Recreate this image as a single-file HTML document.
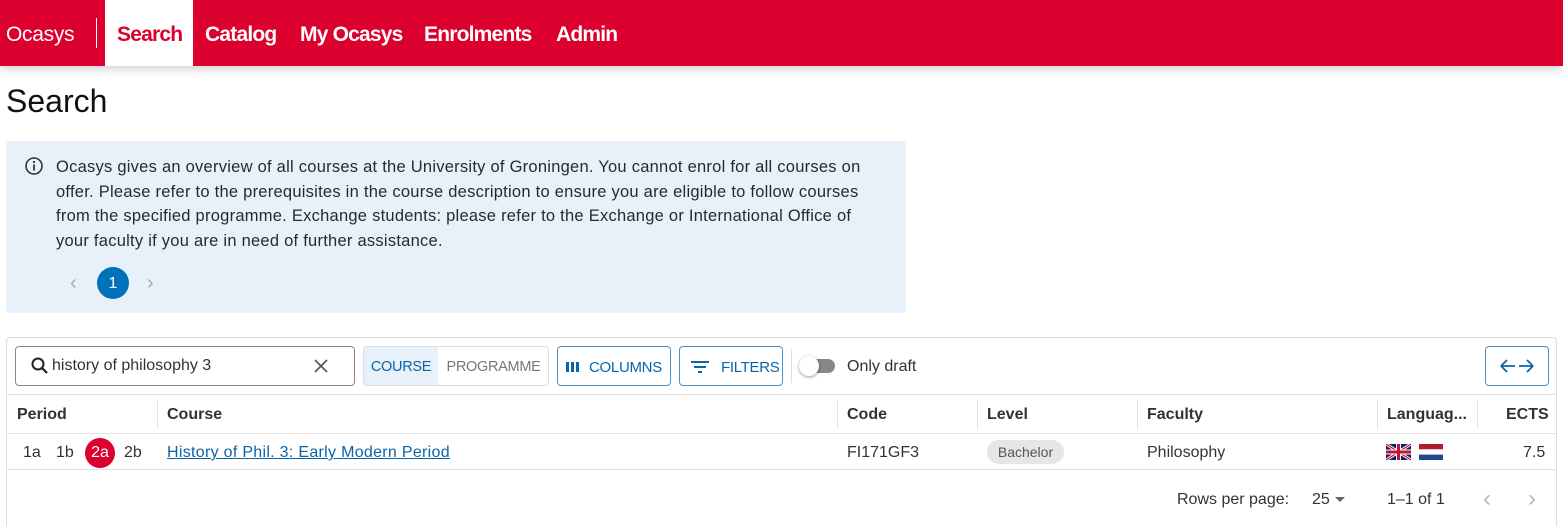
<!DOCTYPE html>
<html><head><meta charset="utf-8"><style>
*{box-sizing:border-box;margin:0;padding:0}
html,body{width:1563px;height:526px;overflow:hidden}
body{background:#fff;font-family:"Liberation Sans",sans-serif;color:#222;position:relative}
.a{position:absolute}
nav{position:absolute;left:0;top:0;width:1563px;height:66px;background:#dc002e;box-shadow:0 3px 10px rgba(0,0,0,.18)}
nav span{position:absolute;top:23px;font-size:21px;color:#fff;font-weight:bold;letter-spacing:-.8px}
.info{left:6px;top:141px;width:900px;height:172px;background:#e8f1f9;border-radius:4px}
.info p{position:absolute;left:50px;top:14px;width:850px;font-size:16.5px;letter-spacing:.25px;line-height:24.5px;color:#1e2a36;white-space:nowrap}
.card{left:6px;top:337px;width:1551px;height:190px;border:1px solid #ddd;border-bottom:none;border-radius:4px 4px 0 0}
.btn{position:absolute;top:346px;height:40px;border:1px solid #4a90c8;border-radius:4px;color:#0a64a8;font-size:15px;display:flex;align-items:center;padding-top:2px}
.th{position:absolute;top:406px;font-size:16px;font-weight:bold;color:#333}
.td{position:absolute;top:444px;font-size:16px;color:#333}
.vd{position:absolute;top:400px;width:1px;height:29px;background:#e2e2e2}
</style></head><body>
<nav>
<span style="left:6px;font-weight:normal;letter-spacing:-.3px">Ocasys</span>
<div class="a" style="left:96px;top:18px;width:1px;height:30px;background:#fff"></div>
<div class="a" style="left:105px;top:0;width:88px;height:66px;background:#fff"></div>
<span style="left:117px;color:#dc002e">Search</span>
<span style="left:205px">Catalog</span>
<span style="left:300px">My Ocasys</span>
<span style="left:424px">Enrolments</span>
<span style="left:556px">Admin</span>
</nav>
<div class="a" style="left:6px;top:83px;font-size:32px;color:#111">Search</div>
<div class="a info">
<svg class="a" style="left:18px;top:15px" width="20" height="20" viewBox="0 0 20 20"><circle cx="10" cy="10" r="8" fill="none" stroke="#333" stroke-width="1.6"/><rect x="9.1" y="8.5" width="1.8" height="6" fill="#333"/><circle cx="10" cy="6" r="1.1" fill="#333"/></svg>
<p>Ocasys gives an overview of all courses at the University of Groningen. You cannot enrol for all courses on<br>offer. Please refer to the prerequisites in the course description to ensure you are eligible to follow courses<br>from the specified programme. Exchange students: please refer to the Exchange or International Office of<br>your faculty if you are in need of further assistance.</p>
<div class="a" style="left:64px;top:131px;color:#aaa;font-size:20px">‹</div>
<div class="a" style="left:91px;top:126px;width:32px;height:32px;border-radius:50%;background:#0072b9;color:#fff;font-size:16px;text-align:center;line-height:33px">1</div>
<div class="a" style="left:141px;top:131px;color:#aaa;font-size:20px">›</div>
</div>
<div class="a card"></div>
<div class="a" style="left:15px;top:346px;width:340px;height:40px;border:1px solid #888;border-radius:4px"></div>
<svg class="a" style="left:30px;top:356px" width="20" height="20" viewBox="0 0 20 20"><circle cx="8" cy="8" r="5.5" fill="none" stroke="#222" stroke-width="2"/><path d="M12 12l5 5" stroke="#222" stroke-width="2.2"/></svg>
<div class="a" style="left:52px;top:357px;font-size:16px;color:#333">history of philosophy 3</div>
<svg class="a" style="left:313px;top:358px" width="16" height="16" viewBox="0 0 16 16"><path d="M2 2l12 12M14 2L2 14" stroke="#555" stroke-width="1.7"/></svg>
<div class="a" style="left:363px;top:346px;width:186px;height:40px;border:1px solid #ddd;border-radius:4px;overflow:hidden;font-size:14.5px;letter-spacing:-.3px">
<div class="a" style="left:0;top:0;width:74px;height:38px;background:#e8f1f9;color:#0a64a8;line-height:40px;text-align:center">COURSE</div>
<div class="a" style="left:74px;top:0;width:111px;height:38px;color:#777;line-height:40px;text-align:center">PROGRAMME</div>
</div>
<div class="btn" style="left:557px;width:114px;letter-spacing:-.3px"><svg style="margin:0 9px 0 8px" width="14" height="12" viewBox="0 0 14 12"><rect x="0" y="1" width="3" height="10" fill="#0a64a8"/><rect x="5" y="1" width="3" height="10" fill="#0a64a8"/><rect x="10" y="1" width="3" height="10" fill="#0a64a8"/></svg>COLUMNS</div>
<div class="btn" style="left:679px;width:104px;letter-spacing:-.3px"><svg style="margin:0 12px 0 11px" width="18" height="14" viewBox="0 0 18 14"><path d="M0 2h18M3 7h12M7 12h4" stroke="#0a64a8" stroke-width="2"/></svg>FILTERS</div>
<div class="a" style="left:791px;top:349px;width:1px;height:34px;background:#ddd"></div>
<div class="a" style="left:802px;top:359px;width:33px;height:14px;border-radius:7px;background:#888"></div>
<div class="a" style="left:799px;top:356px;width:20px;height:20px;border-radius:50%;background:#fff;box-shadow:0 1px 3px rgba(0,0,0,.4)"></div>
<div class="a" style="left:847px;top:358px;font-size:16px;color:#333">Only draft</div>
<div class="btn" style="left:1485px;width:64px;justify-content:center;padding-top:0"><svg width="36" height="18" viewBox="0 0 36 18"><path d="M2 9h14M2 9l6-6M2 9l6 6M20 9h14M34 9l-6-6M34 9l-6 6" stroke="#0a64a8" stroke-width="1.8" fill="none"/></svg></div>
<div class="a" style="left:7px;top:394px;width:1549px;height:1px;background:#e0e0e0"></div>
<div class="a" style="left:7px;top:433px;width:1549px;height:1px;background:#e0e0e0"></div>
<div class="a" style="left:7px;top:469px;width:1549px;height:1px;background:#e0e0e0"></div>
<div class="vd" style="left:157px"></div><div class="vd" style="left:837px"></div><div class="vd" style="left:977px"></div><div class="vd" style="left:1137px"></div><div class="vd" style="left:1377px"></div><div class="vd" style="left:1477px"></div>
<div class="th" style="left:17px">Period</div>
<div class="th" style="left:167px">Course</div>
<div class="th" style="left:847px">Code</div>
<div class="th" style="left:987px">Level</div>
<div class="th" style="left:1147px">Faculty</div>
<div class="th" style="left:1387px">Languag...</div>
<div class="th" style="left:1506px">ECTS</div>
<div class="td" style="left:23px">1a</div>
<div class="td" style="left:56px">1b</div>
<div class="a" style="left:85px;top:438px;width:30px;height:30px;border-radius:50%;background:#dc002e;color:#fff;font-size:16px;text-align:center;line-height:30px">2a</div>
<div class="td" style="left:124px">2b</div>
<div class="td" style="left:167px;color:#0a64a8;text-decoration:underline;letter-spacing:.3px">History of Phil. 3: Early Modern Period</div>
<div class="td" style="left:847px">FI171GF3</div>
<div class="a" style="left:987px;top:440px;width:77px;height:24px;border-radius:12px;background:#e6e6e6;color:#555;font-size:14px;text-align:center;line-height:24px">Bachelor</div>
<div class="td" style="left:1147px">Philosophy</div>
<svg class="a" style="left:1386px;top:444px" width="25" height="16" viewBox="0 0 25 16"><rect width="25" height="16" fill="#012169"/><path d="M0 0L25 16M25 0L0 16" stroke="#fff" stroke-width="3"/><path d="M0 0L25 16M25 0L0 16" stroke="#c8102e" stroke-width="1.2"/><path d="M12.5 0v16M0 8h25" stroke="#fff" stroke-width="5"/><path d="M12.5 0v16M0 8h25" stroke="#c8102e" stroke-width="3"/></svg>
<svg class="a" style="left:1419px;top:444px" width="24" height="16" viewBox="0 0 24 16"><rect width="24" height="5.4" fill="#ae1c28"/><rect y="5.3" width="24" height="5.4" fill="#fff"/><rect y="10.6" width="24" height="5.4" fill="#21468b"/></svg>
<div class="td" style="left:1523px">7.5</div>
<div class="a" style="left:1177px;top:491px;font-size:16px;color:#333">Rows per page:</div>
<div class="a" style="left:1312px;top:491px;font-size:16px;color:#333">25</div>
<div class="a" style="left:1335px;top:497px;border-left:5px solid transparent;border-right:5px solid transparent;border-top:5px solid #666"></div>
<div class="a" style="left:1387px;top:491px;font-size:16px;color:#333">1–1 of 1</div>
<div class="a" style="left:1483px;top:485px;font-size:24px;color:#bbb">‹</div>
<div class="a" style="left:1528px;top:485px;font-size:24px;color:#bbb">›</div>
</body></html>
